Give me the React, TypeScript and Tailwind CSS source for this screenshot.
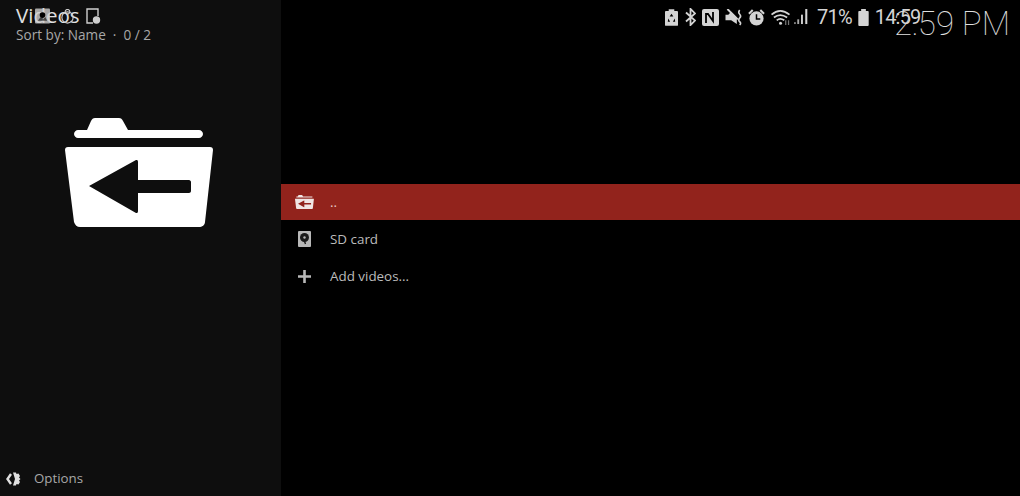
import React from 'react';

const FolderBack = ({ className, arrow }: { className: string; arrow: string }) => (
  <svg viewBox="0 0 149 109" className={className}>
    <path d="M9 16c0-2 2-4 4-4h9l4-9c1-2 2-3 4-3h24c2 0 3 1 4 3l5 9h71c2 0 4 2 4 4s-2 4-4 4H13c-2 0-4-2-4-4z" fill="currentColor" />
    <path d="M3 29h142c2 0 3 1 3 3l-8 72c0 3-3 5-6 5H15c-3 0-5-2-6-5L0 32c0-2 1-3 3-3z" fill="currentColor" />
    <path d="M24 68l47-26c1 0 2 0 2 2v18h51c1 0 2 1 2 2v9c0 1-1 2-2 2H73v18c0 2-1 2-2 2z" fill={arrow} />
  </svg>
);

const StatusIcons = () => (
  <div className="flex items-center text-[#d4d4d4]">
    {/* battery saver */}
    <svg viewBox="0 0 14 18" className="w-[13px] h-[17px] ml-[665px]">
      <path d="M4 0h6v2h3a1 1 0 0 1 1 1v14a1 1 0 0 1-1 1H1a1 1 0 0 1-1-1V3a1 1 0 0 1 1-1h3z" fill="currentColor" />
      <path d="M7 5l2 3H5zM3.500 10l2 3.500H3zM10.500 10l.5 3.500H8.500z" fill="#000" />
    </svg>
    {/* bluetooth */}
    <svg viewBox="0 0 12 20" className="w-[11px] h-[18px] ml-[7px]" fill="none" stroke="currentColor" strokeWidth="2">
      <path d="M1 5l10 9-5 5V1l5 5-10 9" />
    </svg>
    {/* nfc */}
    <svg viewBox="0 0 17 17" className="w-[17px] h-[17px] ml-[6px]">
      <rect width="17" height="17" rx="2" fill="currentColor" />
      <path d="M4 14V5h2l5 7V3" fill="none" stroke="#000" strokeWidth="1.800" />
    </svg>
    {/* mute and vibrate */}
    <svg viewBox="0 0 18 18" className="w-[18px] h-[17px] ml-[6px]">
      <path d="M0 6h3l3-3 6 6v7L6 12H0z" fill="currentColor" />
      <path d="M2 0l11 11" stroke="currentColor" strokeWidth="2" />
      <path d="M15 1q-2 2.500 0 4.500t0 4q-2 2.500 0 4t0 3.500" fill="none" stroke="currentColor" strokeWidth="1.700" />
    </svg>
    {/* alarm */}
    <svg viewBox="0 0 18 18" className="w-[17px] h-[17px] ml-[5px]">
      <circle cx="9" cy="10" r="7.500" fill="currentColor" />
      <path d="M9 5.500v5h4" fill="none" stroke="#000" strokeWidth="1.600" />
      <path d="M1 5l4-4M17 5l-4-4" stroke="currentColor" strokeWidth="2.200" />
    </svg>
    {/* wifi with data arrows */}
    <svg viewBox="0 0 22 18" className="w-[22px] h-[17px] ml-[5px]">
      <path d="M1 6q9-8 19 0M3.500 9q6.500-5 14 0M6.500 12q3.500-3 8 0" fill="none" stroke="currentColor" strokeWidth="1.900" />
      <circle cx="10.500" cy="15" r="1.600" fill="currentColor" />
      <path d="M16 12v5M19 12v5" stroke="#777" strokeWidth="1.300" />
    </svg>
    {/* signal */}
    <svg viewBox="0 0 16 17" className="w-[15px] h-[16px] ml-[2px]" fill="currentColor">
      <rect x="0" y="14" width="2" height="2" opacity="0.6" />
      <rect x="3.500" y="11" width="2" height="5" opacity="0.8" />
      <rect x="7.500" y="6" width="2" height="10" />
      <rect x="12" y="0" width="2.200" height="16" />
    </svg>
    <span className="ml-[8px] text-[20px] tracking-[-0.8px] leading-none font-['Roboto',sans-serif]">71%</span>
    <svg viewBox="0 0 11 18" className="w-[11px] h-[17px] ml-[6px]" fill="currentColor">
      <path d="M3 0h5v2h2a1 1 0 0 1 1 1v14a1 1 0 0 1-1 1H1a1 1 0 0 1-1-1V3a1 1 0 0 1 1-1h2z" />
    </svg>
    <span className="ml-[6px] text-[20px] tracking-[-0.8px] leading-none font-['Roboto',sans-serif]">14:59</span>
  </div>
);

const Row = ({ icon, label, active }: { icon: React.ReactNode; label: string; active?: boolean }) => (
  <div className={`h-[36px] mb-[1px] flex items-center pl-[13px] ${active ? 'bg-[#92231c]' : ''}`}>
    <div className="w-[20px] flex justify-center">{icon}</div>
    <span className={`ml-[16px] text-[13.4px] ${active ? 'text-[#e8c8c4]' : 'text-[#bcbcbc]'}`}>{label}</span>
  </div>
);

export default function App() {
  return (
    <div className="relative w-[1020px] h-[496px] bg-black overflow-hidden font-['Open_Sans',sans-serif] flex">
      {/* left panel */}
      <div className="w-[281px] h-full bg-[#0e0e0e] flex flex-col">
        <div className="pl-[16px] pt-[3px] h-[118px]">
          <div className="text-[20.5px] leading-[24px] text-[#e0e0e0]">Videos</div>
          <div className="text-[13.6px] leading-[16px] text-[#a8a8a8] whitespace-pre">Sort by: Name  ·  0 / 2</div>
        </div>
        <div className="pl-[65px]">
          <FolderBack className="w-[149px] h-[109px] text-white" arrow="#0e0e0e" />
        </div>
        <div className="mt-auto h-[34px] flex items-center pl-[6px] pb-[1px]">
          <svg viewBox="0 0 16 16" className="w-[16px] h-[16px] text-[#e0e0e0]">
            <path d="M5 3L1.500 8 5 13" fill="none" stroke="currentColor" strokeWidth="2.400" />
            <path d="M7 1.500h3l.5 1.500 2-.5 1.500 2.500-1 1.500 1.500 1.500-1.500 1.500 1 1.500-1.500 2.500-2-.5-.5 1.500H7l2-6.500z" fill="currentColor" />
          </svg>
          <span className="ml-[12px] text-[13.3px] text-[#a8a8a8]">Options</span>
        </div>
      </div>

      {/* list */}
      <div className="flex-1 pt-[184px]">
        <Row active label=".." icon={<FolderBack className="w-[19px] h-[14px] text-[#f0e6e4]" arrow="#92231c" />} />
        <Row
          label="SD card"
          icon={
            <svg viewBox="0 0 13 16" className="w-[13px] h-[16px]">
              <rect width="13" height="16" rx="1" fill="#b8b8b8" />
              <circle cx="6.500" cy="6.500" r="4.500" fill="#1a1a1a" />
              <circle cx="6.500" cy="6.500" r="1.200" fill="#b8b8b8" />
              <path d="M6 9l1.500 4" stroke="#1a1a1a" strokeWidth="1.400" />
            </svg>
          }
        />
        <Row
          label="Add videos..."
          icon={
            <svg viewBox="0 0 13 13" className="w-[13px] h-[13px]">
              <path d="M6.500 0v13M0 6.500h13" stroke="#b8b8b8" strokeWidth="2.600" />
            </svg>
          }
        />
      </div>

      {/* clock */}
      <div className="absolute top-[2px] right-[10px] text-[33px] leading-[44px] font-thin font-['Roboto',sans-serif] text-[#e0e0e0]">2:59 PM</div>

      {/* android status bar overlaid by the screenshot */}
      <div className="absolute top-[7px] left-0 w-full">
        <StatusIcons />
      </div>

      {/* notification icons under the title */}
      <div className="absolute top-[7px] left-[35px] flex items-center text-[#cfcfcf]">
        <svg viewBox="0 0 16 16" className="w-[15px] h-[16px]">
          <rect width="16" height="16" rx="1" fill="currentColor" opacity="0.8" />
          <circle cx="8" cy="7" r="3" fill="#000" />
          <path d="M3 13l3-4 3 2 2-2 2 4z" fill="#000" opacity="0.6" />
        </svg>
        <svg viewBox="0 0 16 16" className="w-[15px] h-[15px] ml-[10px] mt-[2px]" fill="none" stroke="currentColor" strokeWidth="1.200">
          <circle cx="8" cy="9" r="6" />
          <circle cx="8" cy="3" r="2.500" />
        </svg>
        <svg viewBox="0 0 16 16" className="w-[16px] h-[16px] ml-[10px] mt-[1px]" fill="none" stroke="currentColor" strokeWidth="1.400">
          <path d="M8 15H2V1h11v7" />
          <circle cx="11.500" cy="12" r="3" fill="currentColor" />
        </svg>
      </div>
    </div>
  );
}
